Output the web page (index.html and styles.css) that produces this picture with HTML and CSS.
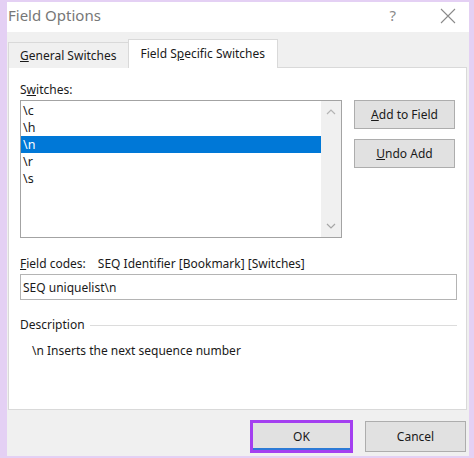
FILE: index.html
```html
<!DOCTYPE html>
<html lang="en">
<head>
  <meta charset="UTF-8" />
  <title>Field Options</title>
  <link rel="stylesheet" href="styles.css">
</head>
<body>

  <div class="window">
    <div class="titlebar">
      <span class="title">Field Options</span>
      <span class="help">?</span>
      <span class="close">
        <svg width="16" height="16" viewBox="0 0 16 16"><path d="M1 1 L15 15 M15 1 L1 15" stroke="#8a8a8a" stroke-width="1.1" fill="none"/></svg>
      </span>
    </div>

    <div class="content">
      <div class="tabs">
        <div class="tab"><span class="key">G</span>eneral Switches</div>
        <div class="tab active">Field S<span class="key">p</span>ecific Switches</div>
      </div>

      <div class="panel">
        <div class="label">S<span class="key">w</span>itches:</div>
        <div class="switch-row">
          <div class="listbox">
            <ul class="items">
              <li>\c</li>
              <li>\h</li>
              <li class="selected">\n</li>
              <li>\r</li>
              <li>\s</li>
            </ul>
            <div class="scrollbar">
              <svg width="10" height="6" viewBox="0 0 10 6"><path d="M1 5 L5 1 L9 5" stroke="#b4b4b4" stroke-width="1.2" fill="none"/></svg>
              <svg width="10" height="6" viewBox="0 0 10 6"><path d="M1 1 L5 5 L9 1" stroke="#a6a6a6" stroke-width="1.2" fill="none"/></svg>
            </div>
          </div>
          <div class="side-buttons">
            <button class="btn"><span class="key">A</span>dd to Field</button>
            <button class="btn"><span class="key">U</span>ndo Add</button>
          </div>
        </div>

        <div class="codes"><span><span class="key">F</span>ield codes:</span><span>SEQ Identifier [Bookmark] [Switches]</span></div>
        <div class="code-input">SEQ uniquelist\n</div>

        <div class="group-head"><span>Description</span><span class="rule"></span></div>
        <div class="desc">\n Inserts the next sequence number</div>
      </div>

      <div class="footer">
        <button class="btn ok">OK</button>
        <button class="btn cancel">Cancel</button>
      </div>
    </div>
  </div>

</body>
</html>
```

FILE: styles.css
```css
body {
  margin: 0;
  padding: 2px 5px 2px 7px;
  background-color: #e4d0f4;
  font-family: 'Noto Sans', sans-serif;
  font-size: 12px;
  color: #1a1a1a;
}

.window {
  width: 462px;
  height: 454px;
  background-color: #f0f0f0;
  display: flex;
  flex-direction: column;
}

.titlebar {
  height: 30px;
  box-sizing: border-box;
  padding: 0 0 4px 1px;
  background-color: #fff;
  display: flex;
  align-items: center;
}

.title {
  font-size: 15px;
  color: #777;
  flex: 1;
}

.help {
  font-size: 15px;
  color: #8a8a8a;
  margin-right: 44px;
}

.close {
  display: flex;
  margin: 2px 13px 0 0;
}

.content {
  flex: 1;
  padding: 8px 2px 0 1px;
  display: flex;
  flex-direction: column;
}

.key {
  text-decoration: underline;
}

.tabs {
  display: flex;
  align-items: flex-end;
  height: 28px;
  margin-bottom: -1px;
  position: relative;
  z-index: 1;
}

.tab {
  height: 26px;
  box-sizing: border-box;
  border: 1px solid #d9d9d9;
  border-bottom: none;
  padding: 0 11px;
  display: flex;
  align-items: center;
  background-color: #f0f0f0;
}

.tab.active {
  height: 29px;
  background-color: #fff;
  margin-left: -1px;
  padding: 0 12px 2px;
}

.panel {
  height: 343px;
  box-sizing: border-box;
  background-color: #fff;
  border: 1px solid #d9d9d9;
  padding: 14px 11px 0;
}

.label {
  line-height: 16px;
  margin-bottom: 2px;
}

.switch-row {
  display: flex;
  gap: 12px;
}

.listbox {
  width: 323px;
  height: 138px;
  box-sizing: border-box;
  border: 1px solid #a3a3a3;
  display: flex;
}

.items {
  list-style: none;
  margin: 0;
  padding: 1px 0 0;
  flex: 1;
  font-size: 12.5px;
}

.items li {
  height: 17px;
  line-height: 17px;
  padding-left: 2px;
}

.items li.selected {
  background-color: #0078d7;
  color: #fff;
}

.scrollbar {
  width: 20px;
  background-color: #f0f0f0;
  display: flex;
  flex-direction: column;
  justify-content: space-between;
  align-items: center;
  padding: 8px 0;
}

.side-buttons {
  display: flex;
  flex-direction: column;
  gap: 10px;
}

.btn {
  font-family: inherit;
  font-size: 12px;
  color: #1a1a1a;
  background-color: #e1e1e1;
  border: 1px solid #adadad;
  padding: 0;
  width: 101px;
  height: 29px;
}

.codes {
  display: flex;
  gap: 12px;
  line-height: 16px;
  margin-top: 18px;
}

.code-input {
  height: 26px;
  box-sizing: border-box;
  margin-top: 2px;
  width: 437px;
  border: 1px solid #b4b4b4;
  line-height: 25px;
  padding-left: 2px;
}

.group-head {
  display: flex;
  align-items: center;
  gap: 5px;
  line-height: 16px;
  margin-top: 17px;
  width: 437px;
}

.rule {
  flex: 1;
  border-top: 1px solid #dcdcdc;
}

.desc {
  line-height: 16px;
  margin-top: 10px;
  padding-left: 12px;
}

.footer {
  display: flex;
  justify-content: flex-end;
  align-items: center;
  gap: 12px;
  padding: 10px 1px 0 0;
}

.btn.ok {
  width: 103px;
  height: 33px;
  border: 3px solid #a43ff0;
  box-shadow: inset 0 -2px 0 #2c7ad6;
}

.btn.cancel {
  height: 31px;
}
```
